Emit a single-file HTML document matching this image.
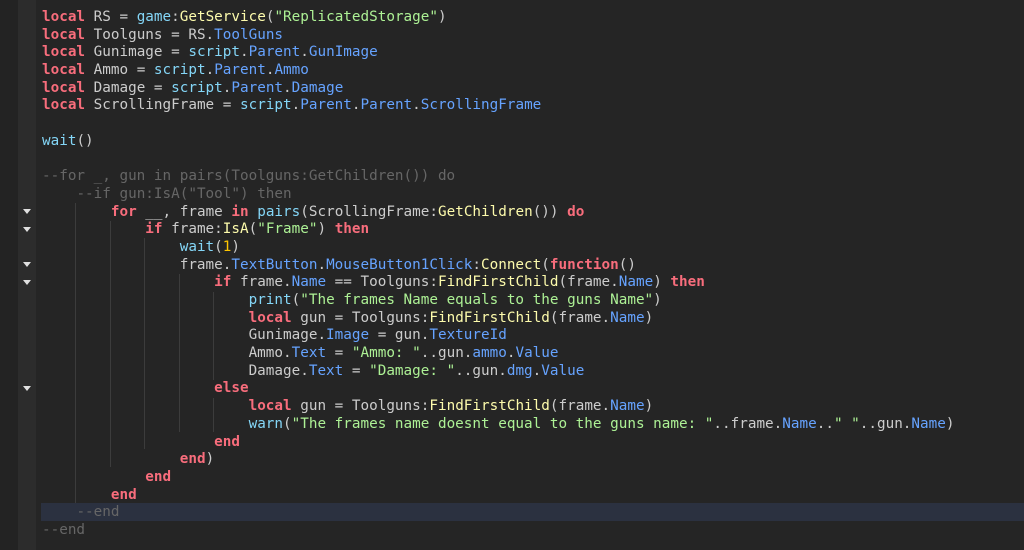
<!DOCTYPE html>
<html><head><meta charset="utf-8"><style>
html,body{margin:0;padding:0;width:1024px;height:550px;overflow:hidden;background:#252525;}
.g1{position:absolute;left:0;top:0;width:18px;height:550px;background:#232323;}
.g2{position:absolute;left:18px;top:0;width:18px;height:550px;background:#2c2c2c;}
.hl{position:absolute;left:41px;top:503px;width:983px;height:18px;background:#2b3140;}
pre{position:absolute;left:42px;top:9px;margin:0;font-family:"DejaVu Sans Mono","Liberation Mono",monospace;font-size:14.3px;line-height:17.69px;color:#cccccc;}
.k{color:#f86d7c;font-weight:bold}
.b{color:#84d6f7}
.m{color:#66a3ff}
.f{color:#fdfbac}
.s{color:#adf195}
.n{color:#ffc600}
.c{color:#666666}
.guide{position:absolute;width:1px;background:#3c3c3c;}
.arr{position:absolute;left:23px;width:0;height:0;border-left:4.5px solid transparent;border-right:4.5px solid transparent;border-top:5px solid #e0e0e0;}
</style></head><body>
<div class="g1"></div><div class="g2"></div><div class="hl"></div>
<div class="guide" style="left:75px;top:203px;height:300px"></div>
<div class="guide" style="left:110px;top:221px;height:246px"></div>
<div class="guide" style="left:144px;top:238px;height:211px"></div>
<div class="guide" style="left:179px;top:274px;height:158px"></div>
<div class="guide" style="left:213px;top:292px;height:88px"></div>
<div class="guide" style="left:213px;top:398px;height:34px"></div>
<div class="arr" style="top:209px"></div>
<div class="arr" style="top:227px"></div>
<div class="arr" style="top:262px"></div>
<div class="arr" style="top:280px"></div>
<div class="arr" style="top:386px"></div>
<pre><span class="k">local</span> RS = <span class="b">game</span>:<span class="f">GetService</span>(<span class="s">"ReplicatedStorage"</span>)
<span class="k">local</span> Toolguns = RS.<span class="m">ToolGuns</span>
<span class="k">local</span> Gunimage = <span class="b">script</span>.<span class="m">Parent</span>.<span class="m">GunImage</span>
<span class="k">local</span> Ammo = <span class="b">script</span>.<span class="m">Parent</span>.<span class="m">Ammo</span>
<span class="k">local</span> Damage = <span class="b">script</span>.<span class="m">Parent</span>.<span class="m">Damage</span>
<span class="k">local</span> ScrollingFrame = <span class="b">script</span>.<span class="m">Parent</span>.<span class="m">Parent</span>.<span class="m">ScrollingFrame</span>

<span class="b">wait</span>()

<span class="c">--for _, gun in pairs(Toolguns:GetChildren()) do</span>
    <span class="c">--if gun:IsA("Tool") then</span>
        <span class="k">for</span> __, frame <span class="k">in</span> <span class="b">pairs</span>(ScrollingFrame:<span class="f">GetChildren</span>()) <span class="k">do</span>
            <span class="k">if</span> frame:<span class="f">IsA</span>(<span class="s">"Frame"</span>) <span class="k">then</span>
                <span class="b">wait</span>(<span class="n">1</span>)
                frame.<span class="m">TextButton</span>.<span class="m">MouseButton1Click</span>:<span class="f">Connect</span>(<span class="k">function</span>()
                    <span class="k">if</span> frame.<span class="m">Name</span> == Toolguns:<span class="f">FindFirstChild</span>(frame.<span class="m">Name</span>) <span class="k">then</span>
                        <span class="b">print</span>(<span class="s">"The frames Name equals to the guns Name"</span>)
                        <span class="k">local</span> gun = Toolguns:<span class="f">FindFirstChild</span>(frame.<span class="m">Name</span>)
                        Gunimage.<span class="m">Image</span> = gun.<span class="m">TextureId</span>
                        Ammo.<span class="m">Text</span> = <span class="s">"Ammo: "</span>..gun.<span class="m">ammo</span>.<span class="m">Value</span>
                        Damage.<span class="m">Text</span> = <span class="s">"Damage: "</span>..gun.<span class="m">dmg</span>.<span class="m">Value</span>
                    <span class="k">else</span>
                        <span class="k">local</span> gun = Toolguns:<span class="f">FindFirstChild</span>(frame.<span class="m">Name</span>)
                        <span class="b">warn</span>(<span class="s">"The frames name doesnt equal to the guns name: "</span>..frame.<span class="m">Name</span>..<span class="s">" "</span>..gun.<span class="m">Name</span>)
                    <span class="k">end</span>
                <span class="k">end</span>)
            <span class="k">end</span>
        <span class="k">end</span>
    <span class="c">--end</span>
<span class="c">--end</span></pre>
</body></html>
